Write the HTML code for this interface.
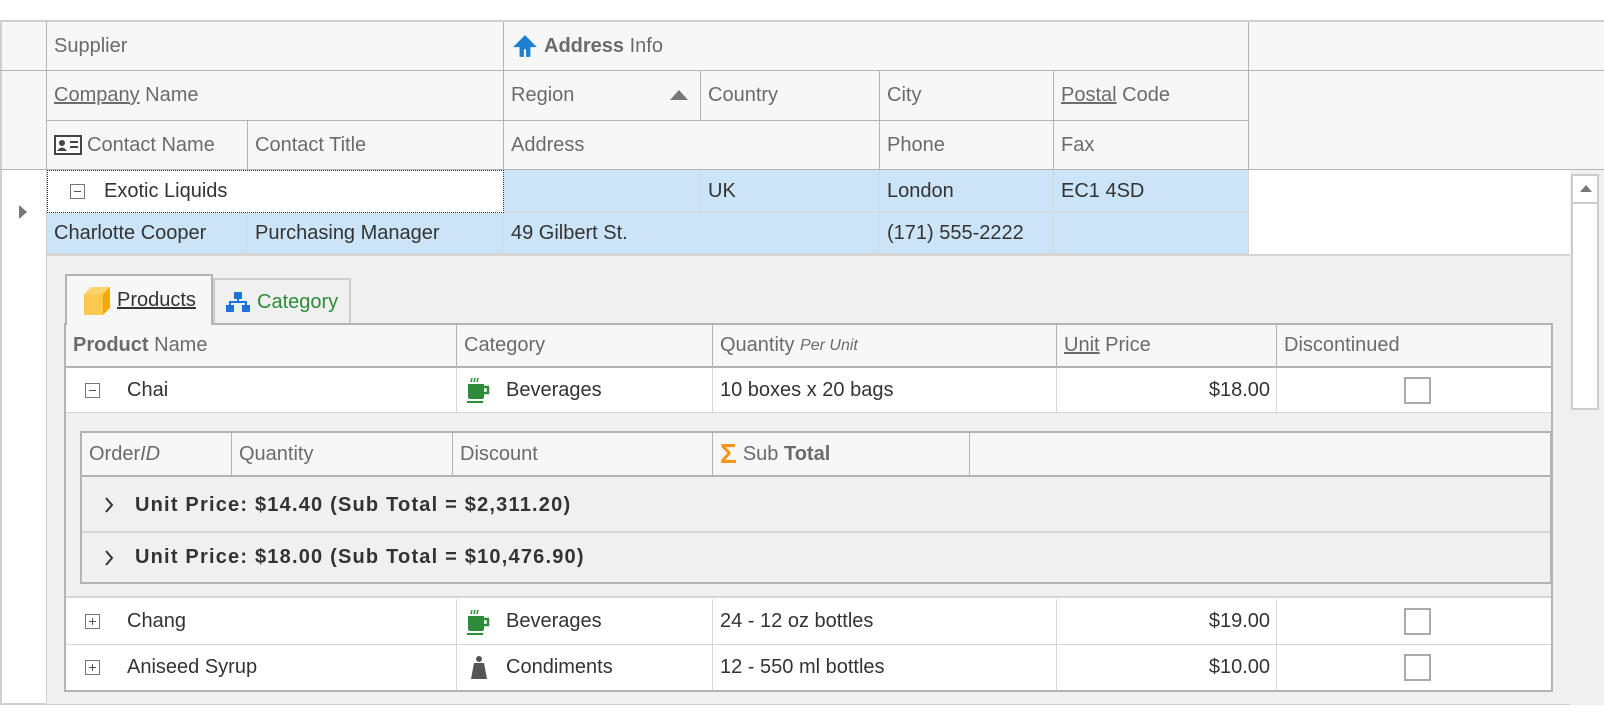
<!DOCTYPE html>
<html><head><meta charset="utf-8"><style>
*{box-sizing:border-box;margin:0;padding:0}
body{width:1604px;height:726px;background:#fff;position:relative;overflow:hidden;font-family:"Liberation Sans",sans-serif;font-size:20px;color:#333}
.a{position:absolute}
.h{position:absolute;background:#f7f7f7;color:#6b6b6b;border-right:1px solid #b4b4b4;border-bottom:1px solid #b4b4b4;padding-left:7px;display:flex;align-items:center;white-space:nowrap;overflow:hidden}
.c{position:absolute;border-right:1px solid #d6d6d6;border-bottom:1px solid #d6d6d6;padding-left:7px;display:flex;align-items:center;white-space:nowrap;overflow:hidden}
.sel{background:#cce4f7}
u{text-decoration:underline}
.box{display:inline-block;width:15px;height:15px;border:1px solid #777;position:relative;margin-right:27px;margin-left:10px;flex:none}
.box:before{content:"";position:absolute;left:3px;right:3px;top:6px;height:1px;background:#555}
.plus:after{content:"";position:absolute;top:3px;bottom:3px;left:6px;width:1px;background:#555}
.chk{width:27px;height:27px;border:2px solid #aaa;background:#fff}
.cup{display:inline-block;margin-right:14px}
.grp{position:absolute;display:flex;align-items:center;padding-left:22px;font-weight:bold;color:#333;letter-spacing:1.2px}
</style></head><body>
<div class="a" style="left:0;top:20px;width:1604px;height:685px;border:2px solid #cfcfcf;border-right:none"></div>
<div class="a" style="left:0;top:20px;width:47px;height:150px;background:#f7f7f7;border-bottom:1px solid #b4b4b4;border-right:1px solid #b4b4b4;border-left:2px solid #cfcfcf;border-top:2px solid #cfcfcf"></div>
<div class="a" style="left:0;top:70px;width:47px;height:1px;background:#b4b4b4"></div>
<div class="a" style="left:46px;top:170px;width:1px;height:535px;background:#cfcfcf"></div>
<div class="h" style="left:47px;top:22px;width:457px;height:49px">Supplier</div>
<div class="h" style="left:504px;top:22px;width:745px;height:49px;padding-left:8px">
<svg width="26" height="24" viewBox="0 0 24 22" style="margin-right:6px"><path d="M12 1 L23 12 H17 V21 H13 V14 H11 V21 H7 V12 H1 Z" fill="#1e7fd0"/></svg><b>Address</b>&nbsp;Info</div>
<div class="h" style="left:1249px;top:22px;width:355px;height:49px;border-right:none"></div>
<div class="h" style="left:47px;top:71px;width:457px;height:50px"><u>Company</u>&nbsp;Name</div>
<div class="h" style="left:504px;top:71px;width:197px;height:50px">Region<svg class="a" style="left:166px;top:19px" width="18" height="10"><path d="M0 10 L9 0 L18 10Z" fill="#777"/></svg></div>
<div class="h" style="left:701px;top:71px;width:179px;height:50px">Country</div>
<div class="h" style="left:880px;top:71px;width:174px;height:50px">City</div>
<div class="h" style="left:1054px;top:71px;width:195px;height:50px"><u>Postal</u>&nbsp;Code</div>
<div class="h" style="left:1249px;top:71px;width:355px;height:99px;border-right:none"></div>
<div class="h" style="left:47px;top:121px;width:201px;height:49px">
<svg width="28" height="20" viewBox="0 0 28 20" style="margin-right:5px"><rect x="1" y="1" width="26" height="18" fill="#fff" stroke="#444" stroke-width="2"/><circle cx="8" cy="8" r="3" fill="#444"/><path d="M3 16 Q8 9 13 16Z" fill="#444"/><rect x="16" y="6" width="8" height="2" fill="#444"/><rect x="16" y="11" width="8" height="2" fill="#444"/></svg>Contact Name</div>
<div class="h" style="left:248px;top:121px;width:256px;height:49px">Contact Title</div>
<div class="h" style="left:504px;top:121px;width:376px;height:49px">Address</div>
<div class="h" style="left:880px;top:121px;width:174px;height:49px">Phone</div>
<div class="h" style="left:1054px;top:121px;width:195px;height:49px">Fax</div>
<svg class="a" style="left:19px;top:205px" width="8" height="14"><path d="M0 0 L8 7 L0 14Z" fill="#777"/></svg>
<div class="c" style="left:47px;top:170px;width:457px;height:43px;border:1px dotted #333;background:#fff;padding-left:12px"><span class="box" style="margin-left:10px;margin-right:19px"></span>Exotic Liquids</div>
<div class="c sel" style="left:504px;top:170px;width:197px;height:43px"></div>
<div class="c sel" style="left:701px;top:170px;width:179px;height:43px">UK</div>
<div class="c sel" style="left:880px;top:170px;width:174px;height:43px">London</div>
<div class="c sel" style="left:1054px;top:170px;width:195px;height:43px">EC1 4SD</div>
<div class="c sel" style="left:47px;top:213px;width:201px;height:41px">Charlotte Cooper</div>
<div class="c sel" style="left:248px;top:213px;width:256px;height:41px">Purchasing Manager</div>
<div class="c sel" style="left:504px;top:213px;width:376px;height:41px">49 Gilbert St.</div>
<div class="c sel" style="left:880px;top:213px;width:174px;height:41px">(171) 555-2222</div>
<div class="c sel" style="left:1054px;top:213px;width:195px;height:41px"></div>
<div class="a" style="left:47px;top:254px;width:1523px;height:450px;background:#f0f0f0;border-top:2px solid #d6d6d6"></div>
<div class="a" style="left:1570px;top:170px;width:34px;height:535px;background:#f0f0f0"></div>
<div class="a" style="left:1571px;top:174px;width:28px;height:236px;border:2px solid #ccc;background:#fff"></div>
<div class="a" style="left:1571px;top:174px;width:28px;height:30px;border:2px solid #ccc;background:#fff"><svg class="a" style="left:7px;top:9px" width="12" height="7"><path d="M0 7 L6 0 L12 7Z" fill="#777"/></svg></div>
<div class="a" style="left:213px;top:278px;width:138px;height:46px;background:#f0f0f0;border:2px solid #ccc;border-bottom:none;display:flex;align-items:center;padding-left:10px;color:#2e8b3a">
<svg width="26" height="22" viewBox="0 0 26 22" style="margin-right:6px"><rect x="9" y="1" width="8" height="7" fill="#1a73d9"/><rect x="1" y="14" width="8" height="7" fill="#1a73d9"/><rect x="17" y="14" width="8" height="7" fill="#1a73d9"/><path d="M13 8 V11 M5 14 V11 H21 V14" stroke="#1a73d9" stroke-width="2" fill="none"/></svg>Category</div>
<div class="a" style="left:65px;top:274px;width:148px;height:51px;background:#f7f7f7;border:2px solid #b4b4b4;border-bottom:none;display:flex;align-items:center;padding-left:16px;z-index:2">
<svg width="28" height="30" viewBox="0 0 28 30" style="margin-right:6px"><path d="M1 8 L8 1 H27 L20 8Z" fill="#ffd36b"/><rect x="1" y="8" width="19" height="21" fill="#ffc94d"/><path d="M20 8 L27 1 V22 L20 29Z" fill="#f5a800"/></svg><u>Products</u></div>
<div class="a" style="left:64px;top:323px;width:1489px;height:369px;border:2px solid #b4b4b4;background:#fff"></div>
<div class="h" style="left:66px;top:325px;width:391px;height:43px;border-bottom:2px solid #b4b4b4"><b>Product</b>&nbsp;Name</div>
<div class="h" style="left:457px;top:325px;width:256px;height:43px;border-bottom:2px solid #b4b4b4">Category</div>
<div class="h" style="left:713px;top:325px;width:344px;height:43px;border-bottom:2px solid #b4b4b4">Quantity&nbsp;<i style="font-size:16px">Per Unit</i></div>
<div class="h" style="left:1057px;top:325px;width:220px;height:43px;border-bottom:2px solid #b4b4b4"><u>Unit</u>&nbsp;Price</div>
<div class="h" style="left:1277px;top:325px;width:274px;height:43px;border-right:none;border-bottom:2px solid #b4b4b4">Discontinued</div>
<div class="c" style="left:66px;top:368px;width:391px;height:45px;padding-left:19px"><span class="box" style="margin-left:0"></span>Chai</div>
<div class="c" style="left:457px;top:368px;width:256px;height:45px;padding-left:9px"><svg class="cup" width="26" height="26" viewBox="0 0 26 26"><path d="M6 1 L5 5 M9 1 L8 5 M12 1 L11 5" stroke="#2e8b3a" stroke-width="1.5"/><path d="M2 7 H18 V20 Q18 22 16 22 H4 Q2 22 2 20Z" fill="#2e8b3a"/><path d="M18 10 H22 V16 H18" stroke="#2e8b3a" stroke-width="2.5" fill="none"/><rect x="1" y="24" width="16" height="2" fill="#2e8b3a"/></svg>Beverages</div>
<div class="c" style="left:713px;top:368px;width:344px;height:45px">10 boxes x 20 bags</div>
<div class="c" style="left:1057px;top:368px;width:220px;height:45px;justify-content:flex-end;padding-right:6px">$18.00</div>
<div class="c" style="left:1277px;top:368px;width:274px;height:45px;border-right:none;justify-content:center"><div class="chk"></div></div>
<div class="a" style="left:66px;top:413px;width:1485px;height:185px;background:#f0f0f0;border-bottom:2px solid #d6d6d6"></div>
<div class="a" style="left:80px;top:431px;width:1472px;height:153px;border:2px solid #b4b4b4;background:#f0f0f0"></div>
<div class="h" style="left:82px;top:433px;width:150px;height:44px;border-bottom:2px solid #b4b4b4">Order<i>ID</i></div>
<div class="h" style="left:232px;top:433px;width:221px;height:44px;border-bottom:2px solid #b4b4b4">Quantity</div>
<div class="h" style="left:453px;top:433px;width:260px;height:44px;border-bottom:2px solid #b4b4b4">Discount</div>
<div class="h" style="left:713px;top:433px;width:257px;height:44px;border-bottom:2px solid #b4b4b4"><span style="color:#f7941d;font-size:28px;font-weight:bold;margin-right:6px">Σ</span>Sub&nbsp;<b>Total</b></div>
<div class="h" style="left:970px;top:433px;width:580px;height:44px;border-right:none;border-bottom:2px solid #b4b4b4"></div>
<div class="grp" style="left:82px;top:479px;width:1468px;height:54px;border-bottom:2px solid #d6d6d6"><svg width="10" height="16" style="margin-right:21px"><path d="M2 1 L8 8 L2 15" stroke="#333" stroke-width="2" fill="none"/></svg>Unit Price: $14.40 (Sub Total = $2,311.20)</div>
<div class="grp" style="left:82px;top:533px;width:1468px;height:49px"><svg width="10" height="16" style="margin-right:21px"><path d="M2 1 L8 8 L2 15" stroke="#333" stroke-width="2" fill="none"/></svg>Unit Price: $18.00 (Sub Total = $10,476.90)</div>
<div class="c" style="left:66px;top:599px;width:391px;height:46px;padding-left:19px"><span class="box plus" style="margin-left:0"></span>Chang</div>
<div class="c" style="left:457px;top:599px;width:256px;height:46px;padding-left:9px"><svg class="cup" width="26" height="26" viewBox="0 0 26 26"><path d="M6 1 L5 5 M9 1 L8 5 M12 1 L11 5" stroke="#2e8b3a" stroke-width="1.5"/><path d="M2 7 H18 V20 Q18 22 16 22 H4 Q2 22 2 20Z" fill="#2e8b3a"/><path d="M18 10 H22 V16 H18" stroke="#2e8b3a" stroke-width="2.5" fill="none"/><rect x="1" y="24" width="16" height="2" fill="#2e8b3a"/></svg>Beverages</div>
<div class="c" style="left:713px;top:599px;width:344px;height:46px">24 - 12 oz bottles</div>
<div class="c" style="left:1057px;top:599px;width:220px;height:46px;justify-content:flex-end;padding-right:6px">$19.00</div>
<div class="c" style="left:1277px;top:599px;width:274px;height:46px;border-right:none;justify-content:center"><div class="chk"></div></div>
<div class="c" style="left:66px;top:645px;width:391px;height:45px;padding-left:19px;border-bottom:none"><span class="box plus" style="margin-left:0"></span>Aniseed Syrup</div>
<div class="c" style="left:457px;top:645px;width:256px;height:45px;padding-left:12px;border-bottom:none"><svg class="cup" width="20" height="26" viewBox="0 0 20 26" style="margin-right:17px"><circle cx="10" cy="4" r="3" fill="#555"/><path d="M5 8 H15 L18 24 H2Z" fill="#555"/></svg>Condiments</div>
<div class="c" style="left:713px;top:645px;width:344px;height:45px;border-bottom:none">12 - 550 ml bottles</div>
<div class="c" style="left:1057px;top:645px;width:220px;height:45px;justify-content:flex-end;padding-right:6px;border-bottom:none">$10.00</div>
<div class="c" style="left:1277px;top:645px;width:274px;height:45px;border-right:none;justify-content:center;border-bottom:none"><div class="chk"></div></div>
</body></html>
